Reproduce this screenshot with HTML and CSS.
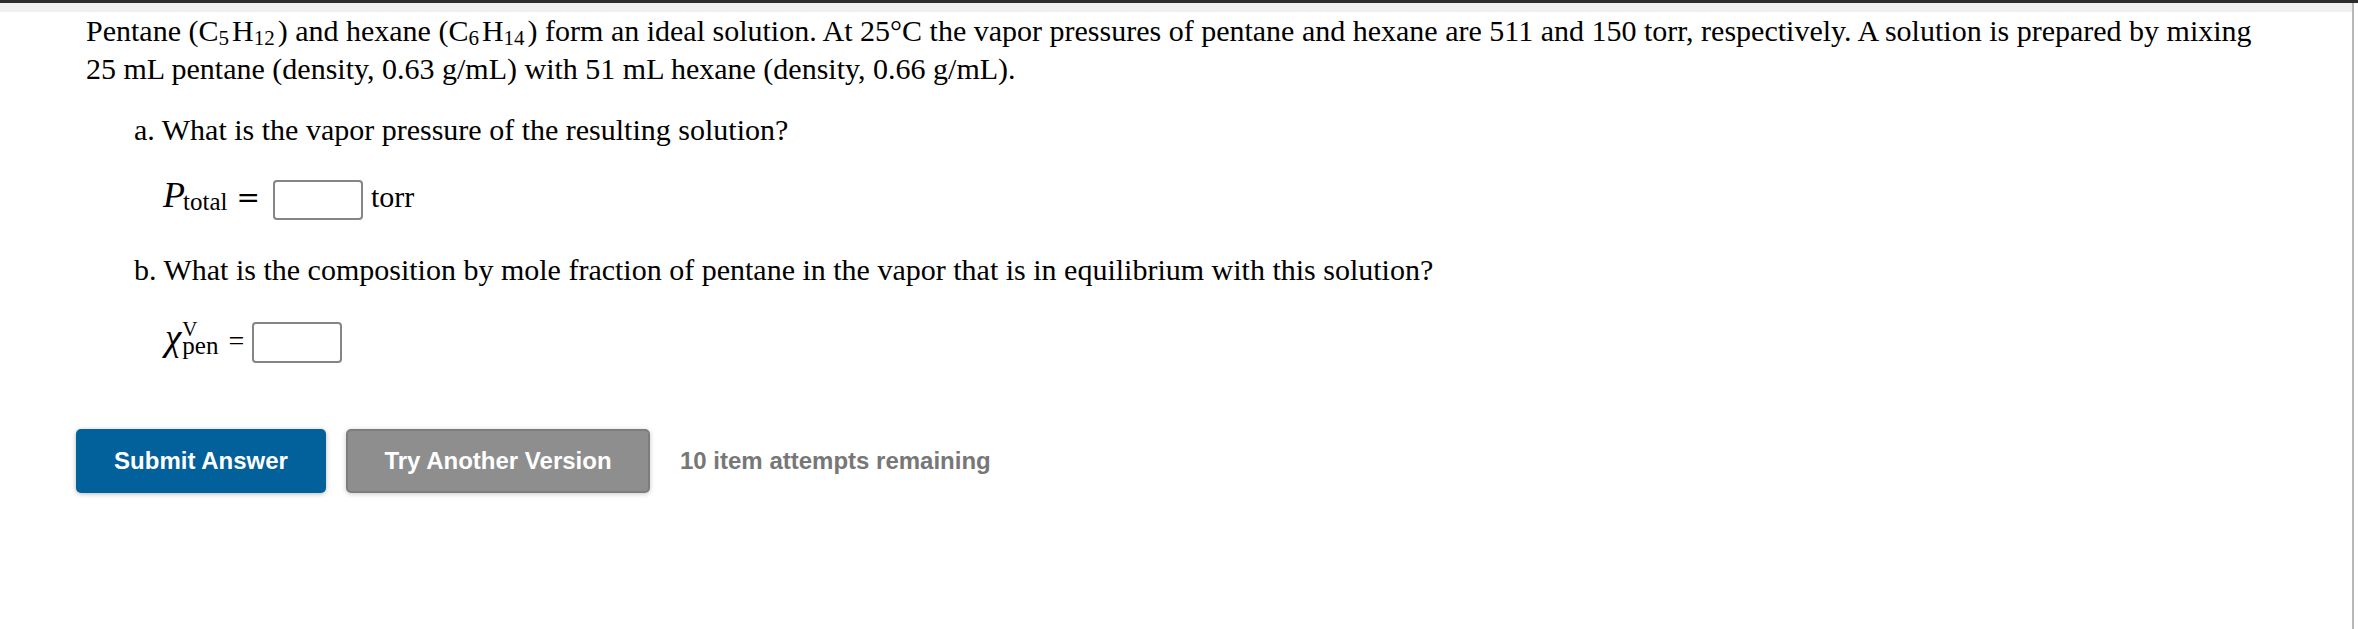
FILE: index.html
```html
<!DOCTYPE html>
<html lang="en">
<head>
<meta charset="utf-8">
<title>Vapor pressure question</title>
<link rel="stylesheet" href="styles.css">
</head>
<body>
<div class="topbar"></div>
<div class="viewport">
  <main class="content">
    <div class="strip"></div>
    <p class="question">Pentane (<span class="chem">C<span class="csub">5</span>H<span class="csub">12</span></span>) and hexane (<span class="chem">C<span class="csub">6</span>H<span class="csub">14</span></span>) form an ideal solution. At 25°C the vapor pressures of pentane and hexane are 511 and 150 torr, respectively. A solution is prepared by mixing 25 mL pentane (density, 0.63 g/mL) with 51 mL hexane (density, 0.66 g/mL).</p>

    <section class="part">
      <p class="label">a. What is the vapor pressure of the resulting solution?</p>
      <div class="answer">
        <span class="math"><span class="var-p">P</span><span class="msub">total</span></span>
        <span class="eq eq-wide">=</span>
        <input class="field" type="text" aria-label="P total">
        <span class="unit">torr</span>
      </div>
    </section>

    <section class="part part-b">
      <p class="label">b. What is the composition by mole fraction of pentane in the vapor that is in equilibrium with this solution?</p>
      <div class="answer answer-chi">
        <span class="math"><span class="var-chi">χ</span><span class="msup">V</span><span class="msub2">pen</span></span>
        <span class="eq eq-narrow">=</span>
        <input class="field field-chi" type="text" aria-label="chi pen vapor">
      </div>
    </section>

    <div class="actions">
      <button class="btn btn-primary" type="button">Submit Answer</button>
      <button class="btn btn-secondary" type="button">Try Another Version</button>
      <span class="attempts">10 item attempts remaining</span>
    </div>
  </main>
  <div class="edge"></div>
</div>
</body>
</html>
```

FILE: styles.css
```css
html, body {
  margin: 0;
  padding: 0;
  background: #ffffff;
}

body {
  width: 2358px;
  height: 629px;
  overflow: hidden;
  font-family: "Liberation Serif", "Times New Roman", serif;
  color: #000;
}

.topbar {
  height: 3px;
  background: #2b2b2b;
}

.viewport {
  display: flex;
  height: 626px;
  padding-right: 4px;
}

.content {
  flex: 1;
  min-width: 0;
}

.edge {
  width: 2px;
  background: #b8b8b8;
}

.strip {
  height: 9px;
  background: #efefef;
}

.question {
  margin: 0;
  padding: 0 80px 0 86px;
  font-size: 30px;
  line-height: 37.5px;
}

.chem {
  white-space: nowrap;
}

.csub {
  font-size: 21px;
  line-height: 0;
  vertical-align: -4px;
  margin-right: 3px;
}

.part {
  margin-left: 134px;
  margin-top: 24px;
}

.part-b {
  margin-top: 31px;
}

.label {
  margin: 0;
  font-size: 30px;
  line-height: 37.5px;
}

.answer {
  display: flex;
  align-items: baseline;
  margin: 31px 0 0 28px;
  line-height: 0.8;
}

.answer-chi {
  margin-top: 33px;
}

.math {
  white-space: nowrap;
  line-height: 0.8;
}

.var-p {
  font-style: italic;
  font-size: 36px;
  margin-left: 1px;
}

.msub {
  font-size: 25px;
  vertical-align: -3px;
  margin-left: -2px;
}

.var-chi {
  font-style: italic;
  font-size: 37px;
  margin-left: 3px;
  margin-right: 1px;
}

.msup {
  display: inline-block;
  width: 0;
  font-size: 21px;
  vertical-align: 14px;
}

.msub2 {
  font-size: 25px;
  vertical-align: -4px;
}

.eq {
  line-height: 0.8;
}

.eq-wide {
  font-family: "DejaVu Serif", serif;
  font-size: 28px;
  margin: 0 13px 0 9px;
}

.eq-narrow {
  font-family: "Liberation Serif", serif;
  font-size: 28px;
  margin: 0 8px 0 10px;
}

.field {
  box-sizing: border-box;
  width: 90px;
  height: 40px;
  border: 2px solid #858585;
  border-radius: 4px;
  font-family: "Liberation Serif", serif;
  font-size: 24px;
  padding: 0 6px;
  background: #fff;
}

.field-chi {
  height: 41px;
}

.unit {
  font-size: 30px;
  line-height: 0.8;
  margin-left: 8px;
}

.actions {
  display: flex;
  align-items: center;
  gap: 20px;
  margin: 66px 0 0 76px;
}

.btn {
  height: 64px;
  border-radius: 5px;
  font-family: "Liberation Sans", Arial, sans-serif;
  font-weight: bold;
  font-size: 24px;
  color: #fff;
  cursor: pointer;
}

.btn-primary {
  width: 250px;
  background: #02609a;
  border: none;
  box-shadow: 0 1px 5px rgba(0, 0, 0, 0.28);
}

.btn-secondary {
  width: 304px;
  background: #8e8e8e;
  border: 2px solid #7d7d7d;
  box-shadow: 0 1px 5px rgba(0, 0, 0, 0.22);
}

.attempts {
  margin-left: 10px;
  font-family: "Liberation Sans", Arial, sans-serif;
  font-weight: bold;
  font-size: 24px;
  color: #777777;
}
```
